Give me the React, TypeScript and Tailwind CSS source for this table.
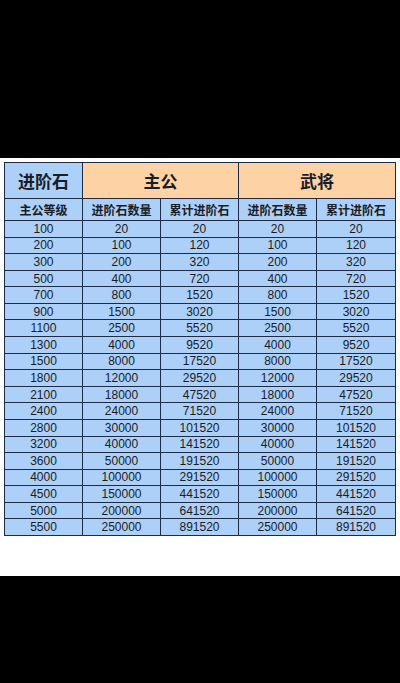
import React from "react"

const rows: [number, number, number][] = [
  [100, 20, 20],
  [200, 100, 120],
  [300, 200, 320],
  [500, 400, 720],
  [700, 800, 1520],
  [900, 1500, 3020],
  [1100, 2500, 5520],
  [1300, 4000, 9520],
  [1500, 8000, 17520],
  [1800, 12000, 29520],
  [2100, 18000, 47520],
  [2400, 24000, 71520],
  [2800, 30000, 101520],
  [3200, 40000, 141520],
  [3600, 50000, 191520],
  [4000, 100000, 291520],
  [4500, 150000, 441520],
  [5000, 200000, 641520],
  [5500, 250000, 891520],
]

const cell = "flex items-center justify-center border-r border-b border-[#1f2a44]"

export default function App() {
  return (
    <div
      className="w-[400px] h-[683px] bg-black flex flex-col"
      style={{ fontFamily: '"Noto Sans CJK SC", "Noto Sans", sans-serif' }}
    >
      <div className="h-[158px]" />
      <div className="h-[418px] bg-white pt-[4px] px-[4px]">
        <div className="grid grid-cols-[78px_78px_78px_78px_79px] border-l border-t border-[#1f2a44] text-[#1a1c26]">
          <div className={`${cell} h-[36px] bg-[#acd0f7] text-[17px] font-bold`}>进阶石</div>
          <div className={`${cell} col-span-2 h-[36px] bg-[#fdd2a5] text-[17px] font-bold`}>主公</div>
          <div className={`${cell} col-span-2 h-[36px] bg-[#fdd2a5] text-[17px] font-bold`}>武将</div>
          {["主公等级", "进阶石数量", "累计进阶石", "进阶石数量", "累计进阶石"].map((t, i) => (
            <div key={i} className={`${cell} h-[22px] bg-[#acd0f7] text-[12px] font-semibold`}>
              {t}
            </div>
          ))}
          {rows.map(([lv, n, sum]) =>
            [lv, n, sum, n, sum].map((v, i) => (
              <div
                key={`${lv}-${i}`}
                className={`${cell} h-[16.58px] bg-[#acd0f7] text-[12px] leading-none font-['Liberation_Sans',sans-serif]`}
              >
                {v}
              </div>
            ))
          )}
        </div>
      </div>
    </div>
  )
}
